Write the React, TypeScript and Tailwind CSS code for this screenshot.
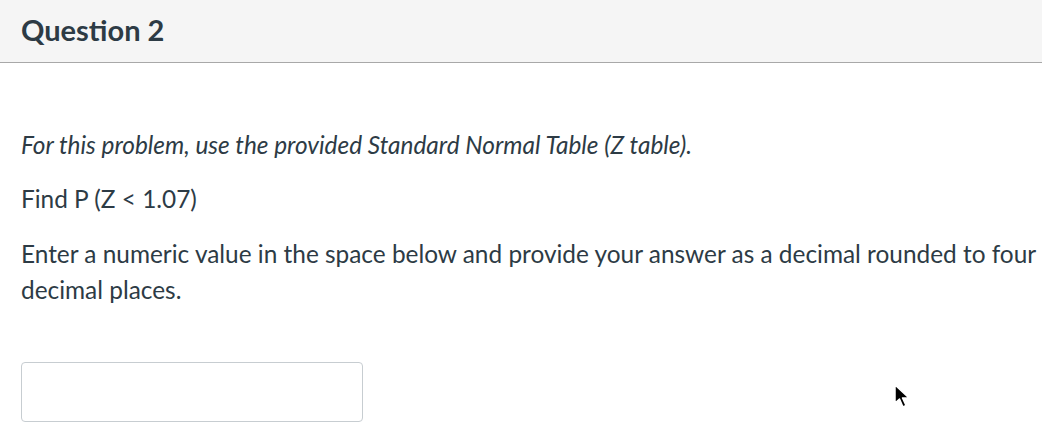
import React from 'react';

const App: React.FC = () => {
  return (
    <div className="relative w-[1042px] h-[448px] bg-white overflow-hidden text-[#2d3b45] font-['Lato','Liberation_Sans',sans-serif]">
      <div className="h-[63px] bg-[#f5f5f5] border-b border-[#a8a8a8] flex items-center px-[21px] pb-[4px]">
        <h2 className="text-[29px] font-bold leading-none">Question 2</h2>
      </div>

      <div className="px-[21px] pt-[64px] text-[24.4px] leading-[36px]">
        <p className="italic">For this problem, use the provided Standard Normal Table (Z table).</p>
        <p className="mt-[18px]">Find P (Z &lt; 1.07)</p>
        <p className="mt-[19px] whitespace-nowrap">
          Enter a numeric value in the space below and provide your answer as a decimal rounded to four
          <br />
          decimal places.
        </p>
        <input
          type="text"
          className="block mt-[54px] w-[342px] h-[60px] border border-[#c7cdd1] rounded-[4px] bg-white outline-none"
        />
      </div>

      <svg className="absolute left-[893px] top-[383px]" width="22" height="28" viewBox="0 0 22 28">
        <path d="M2 2 L2 20 L6.5 16 L10 24 L13 22.5 L9.5 15 L16 15 Z" fill="#000" stroke="#fff" strokeWidth="1.5" strokeLinejoin="round" />
      </svg>
    </div>
  );
};

export default App;
